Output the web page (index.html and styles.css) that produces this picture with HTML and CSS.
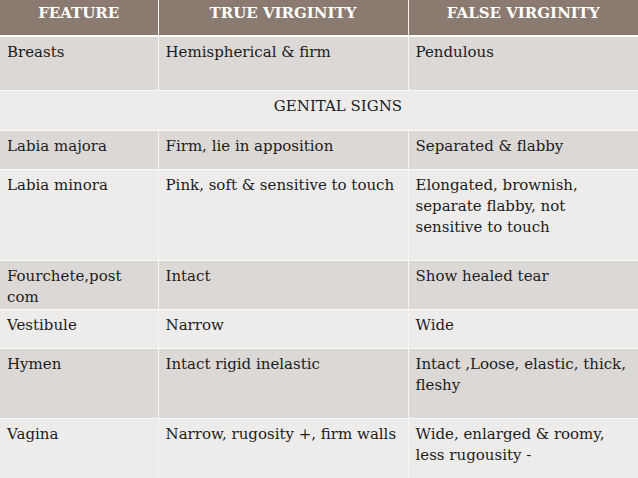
FILE: index.html
```html
<!DOCTYPE html>
<html>
<head>
<meta charset="utf-8">
<link rel="stylesheet" href="styles.css">
</head>
<body>
<table class="grid">
  <colgroup>
    <col class="c1"><col class="c2"><col class="c3">
  </colgroup>
  <thead>
    <tr class="head">
      <th>FEATURE</th>
      <th>TRUE VIRGINITY</th>
      <th>FALSE VIRGINITY</th>
    </tr>
  </thead>
  <tbody>
    <tr class="dark r-breasts">
      <td>Breasts</td>
      <td>Hemispherical &amp; firm</td>
      <td>Pendulous</td>
    </tr>
    <tr class="light r-genital">
      <td colspan="3" class="section">GENITAL SIGNS</td>
    </tr>
    <tr class="dark r-majora">
      <td>Labia majora</td>
      <td>Firm, lie in apposition</td>
      <td>Separated &amp; flabby</td>
    </tr>
    <tr class="light r-minora">
      <td>Labia minora</td>
      <td>Pink, soft &amp; sensitive to touch</td>
      <td>Elongated, brownish, separate flabby, not sensitive to touch</td>
    </tr>
    <tr class="dark r-fourchete">
      <td>Fourchete,post com</td>
      <td>Intact</td>
      <td>Show healed tear</td>
    </tr>
    <tr class="light r-vestibule">
      <td>Vestibule</td>
      <td>Narrow</td>
      <td>Wide</td>
    </tr>
    <tr class="dark r-hymen">
      <td>Hymen</td>
      <td>Intact rigid inelastic</td>
      <td>Intact ,Loose, elastic, thick, fleshy</td>
    </tr>
    <tr class="light r-vagina">
      <td>Vagina</td>
      <td>Narrow, rugosity +, firm walls</td>
      <td>Wide, enlarged &amp; roomy, less rugousity -</td>
    </tr>
  </tbody>
</table>
</body>
</html>
```

FILE: styles.css
```css
html, body {
  margin: 0;
  padding: 0;
  background: #edeceb;
}

.grid {
  width: 638px;
  table-layout: fixed;
  border-collapse: collapse;
  font-family: "DejaVu Serif", serif;
  font-size: 15px;
  line-height: 21px;
  color: #1c1c1c;
}

.c1 { width: 158px; }
.c2 { width: 250px; }
.c3 { width: 230px; }

.grid th,
.grid td {
  padding: 5px 2px 0 7px;
  vertical-align: top;
  text-align: left;
  border-left: 1px solid #f7f6f5;
  border-top: 1px solid #fbfbfa;
  box-sizing: border-box;
}

.grid tr > :first-child {
  border-left: none;
}

.head th {
  height: 36px;
  background: #8b7a70;
  color: #ffffff;
  font-weight: bold;
  font-size: 15px;
  text-align: center;
  padding: 3px 2px 0 2px;
  border-top: none;
  border-bottom: 2px solid #ffffff;
}

.dark td { background: #dbd8d6; }
.light td { background: #edeceb; }

.r-breasts td { height: 54px; }
.r-genital td { height: 40px; }
.r-majora td { height: 39px; }
.r-minora td { height: 91px; }
.r-fourchete td { height: 49px; }
.r-vestibule td { height: 39px; }
.r-hymen td { height: 70px; }
.r-vagina td { height: 60px; }

.grid td.section {
  text-align: center;
  padding-left: 40px;
}
```
